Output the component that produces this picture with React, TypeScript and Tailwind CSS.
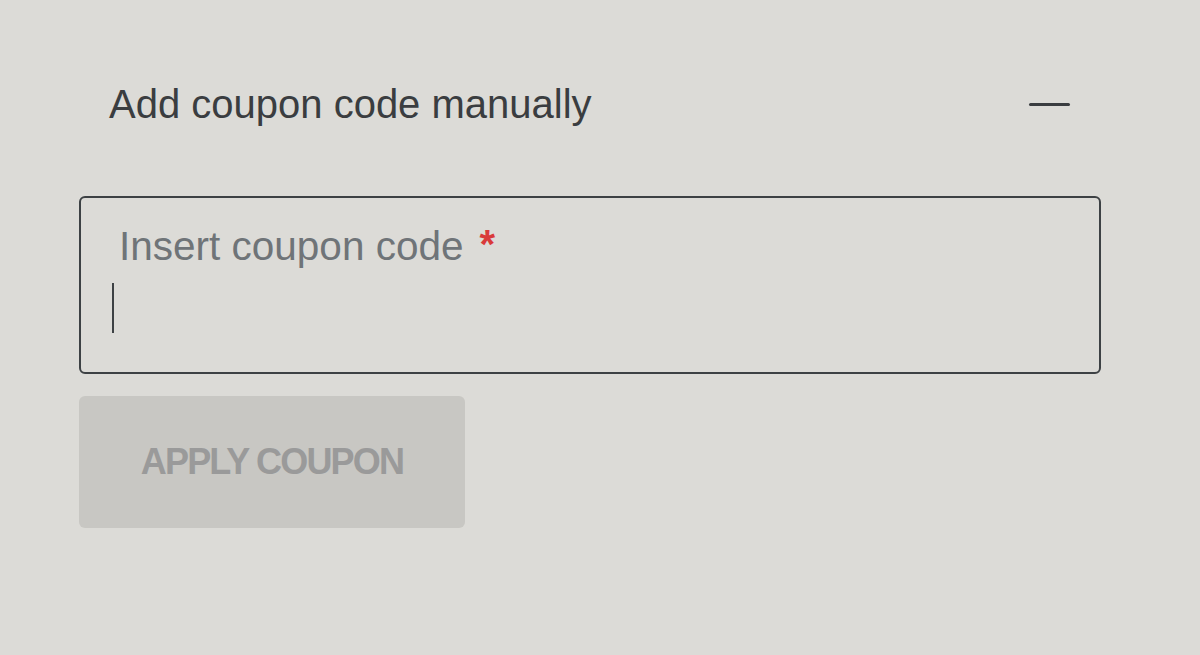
export default function App() {
  return (
    <div className="min-h-screen w-full bg-[#dcdbd7] font-['Liberation_Sans',Arial,sans-serif]">
      <div className="pl-[79px] pr-[99px] pt-[77px]">
        {/* Accordion header */}
        <div className="flex items-center justify-between pl-[30px] pr-[31px] h-[54px]">
          <span className="text-[40px] leading-none text-[#3a3d40]">Add coupon code manually</span>
          <span className="block w-[41px] h-[3px] bg-[#3a3d40] rounded-full" />
        </div>

        {/* Coupon input */}
        <div className="mt-[65px] h-[178px] border-2 border-[#3d4144] rounded-[6px] pl-[38px] pt-[25px]">
          <div className="flex items-start">
            <span className="text-[40.5px] leading-[46px] text-[#6f7478]">Insert coupon code</span>
            <span className="ml-[16px] mt-[1px] text-[40px] leading-none text-[#d93a3a] font-bold">*</span>
          </div>
          <div className="-ml-[7px] mt-[14px] w-[2px] h-[50px] bg-[#3d4144]" />
        </div>

        {/* Apply button */}
        <button className="mt-[22px] w-[386px] h-[132px] rounded-[6px] bg-[#c8c7c3] text-[#9a9a9a] text-[36px] font-bold tracking-[-1.8px] flex items-center justify-center">
          APPLY COUPON
        </button>
      </div>
    </div>
  );
}
